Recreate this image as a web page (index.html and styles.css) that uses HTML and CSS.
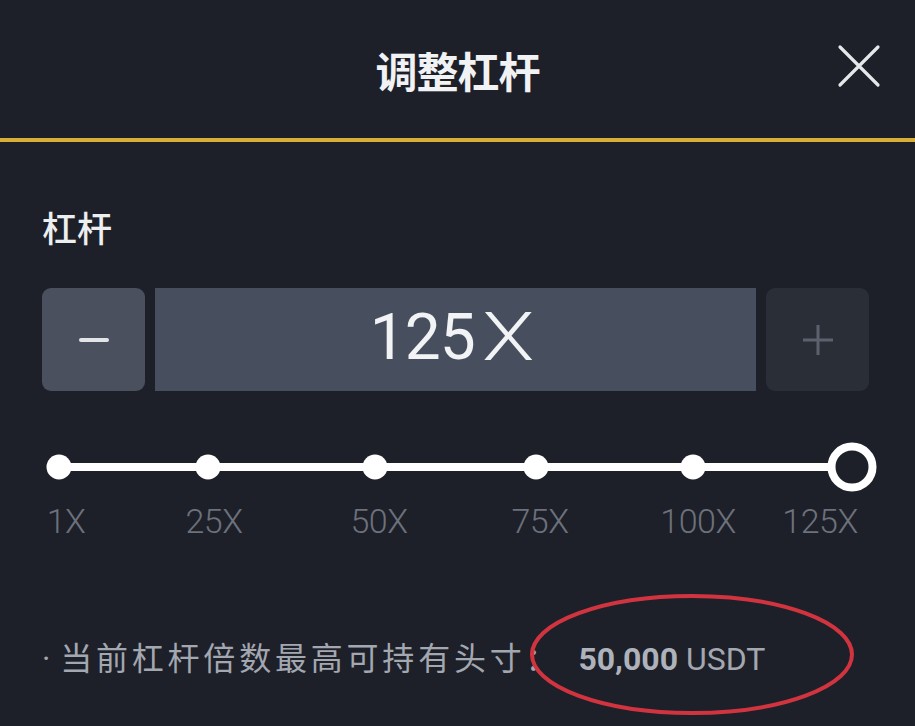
FILE: index.html
```html
<!DOCTYPE html>
<html lang="zh-CN">
<head>
    <meta charset="utf-8">
    <meta name="viewport" content="width=device-width, initial-scale=1.0">
    <title>调整杠杆</title>
    <link rel="stylesheet" href="styles.css">
</head>

<body>
    <header class="top-bar">
        <span></span>
        <h1 class="title">调整杠杆</h1>
        <button class="close" aria-label="关闭">
            <svg width="44" height="44" viewBox="0 0 44 44">
                <path d="M3 3 L41 41 M41 3 L3 41" stroke="#e6e7ea" stroke-width="3.2" stroke-linecap="round" fill="none" />
            </svg>
        </button>
    </header>

    <main class="panel">
        <h2 class="label">杠杆</h2>

        <div class="stepper">
            <button class="step minus"><span class="bar"></span></button>
            <div class="value">125<span class="x">X</span></div>
            <button class="step plus">
                <svg width="32" height="32" viewBox="0 0 32 32">
                    <path d="M16 1 V31 M1 16 H31" stroke="#5b616d" stroke-width="3" fill="none" />
                </svg>
            </button>
        </div>

        <div class="slider">
            <svg class="track" width="827" height="60" viewBox="0 0 827 60">
                <line x1="17" y1="30" x2="806" y2="30" stroke="#ffffff" stroke-width="8" />
                <circle cx="17" cy="30" r="12.5" fill="#ffffff" />
                <circle cx="166" cy="30" r="12.5" fill="#ffffff" />
                <circle cx="333" cy="30" r="12.5" fill="#ffffff" />
                <circle cx="494" cy="30" r="12.5" fill="#ffffff" />
                <circle cx="651" cy="30" r="12.5" fill="#ffffff" />
                <circle cx="810" cy="30" r="20.5" fill="#1d2029" stroke="#ffffff" stroke-width="8" />
            </svg>
            <div class="marks">
                <span style="left: 24px">1X</span>
                <span style="left: 172px">25X</span>
                <span style="left: 337px">50X</span>
                <span style="left: 498px">75X</span>
                <span style="left: 656px">100X</span>
                <span style="left: 778px">125X</span>
            </div>
        </div>

        <p class="note">
            <span class="dot">·</span>当前杠杆倍数最高可持有头寸：<span class="amount"><b>50,000</b> USDT<svg class="ring" width="330" height="127" viewBox="0 0 330 127">
                    <ellipse cx="165" cy="63.5" rx="160" ry="58.5" fill="none" stroke="#d2343f" stroke-width="4" />
                </svg></span>
        </p>
    </main>
</body>
</html>
```

FILE: styles.css
```css
body {
    margin: 0;
    min-height: 726px;
    background-color: #1d2029;
    font-family: Roboto, "Noto Sans CJK SC", sans-serif;
    color: #eeeff1;
}

button {
    border: none;
    padding: 0;
    background: none;
    font-family: inherit;
}

.top-bar {
    display: grid;
    grid-template-columns: 1fr auto 1fr;
    align-items: center;
    height: 138px;
    border-bottom: 4px solid #d8ae36;
}

.title {
    margin: 0;
    font-family: "Noto Sans CJK SC", sans-serif;
    font-size: 42px;
    font-weight: bold;
    color: #f1f2f4;
    letter-spacing: -1px;
}

.close {
    justify-self: end;
    margin-right: 34px;
    margin-top: -6px;
    display: flex;
}

.panel {
    padding: 0 46px 0 42px;
}

.label {
    margin: 64px 0 0 0;
    font-family: "Noto Sans CJK SC", sans-serif;
    font-size: 35px;
    font-weight: 500;
    line-height: 42px;
    color: #eceef0;
}

.stepper {
    display: flex;
    gap: 10px;
    height: 103px;
    margin-top: 40px;
}

.step {
    width: 103px;
    border-radius: 9px;
    display: flex;
    align-items: center;
    justify-content: center;
}

.minus {
    background-color: #4a505d;
}

.minus .bar {
    width: 30px;
    height: 4px;
    border-radius: 2px;
    background-color: #e3e4e7;
}

.plus {
    background-color: #2a2e37;
}

.value {
    flex: 1;
    background-color: #474e5d;
    display: flex;
    align-items: center;
    justify-content: center;
    font-size: 64px;
    letter-spacing: -1px;
    color: #f2f3f5;
    padding: 0 14px 4px 0;
}

.value .x {
    display: inline-block;
    font-weight: 300;
    font-size: 66px;
    margin-left: 13px;
    transform: scaleX(1.3);
}

.slider {
    position: relative;
    margin-top: 46px;
}

.track {
    display: block;
    overflow: visible;
}

.marks {
    position: relative;
    height: 40px;
    margin-top: 4px;
}

.marks span {
    position: absolute;
    top: 0;
    transform: translateX(-50%);
    font-size: 34px;
    font-weight: 300;
    line-height: 40px;
    color: #6c717c;
    letter-spacing: -0.5px;
}

.note {
    margin: 96px 0 0 0;
    font-size: 32px;
    line-height: 44px;
    color: #a3a7b0;
    letter-spacing: 3.8px;
}

.dot {
    margin-right: 6px;
}

.amount {
    position: relative;
    display: inline-block;
    margin-left: 17px;
    letter-spacing: 0;
}

.amount b {
    color: #aeb2ba;
}

.ring {
    position: absolute;
    left: -51px;
    top: -46px;
    overflow: visible;
}
```
